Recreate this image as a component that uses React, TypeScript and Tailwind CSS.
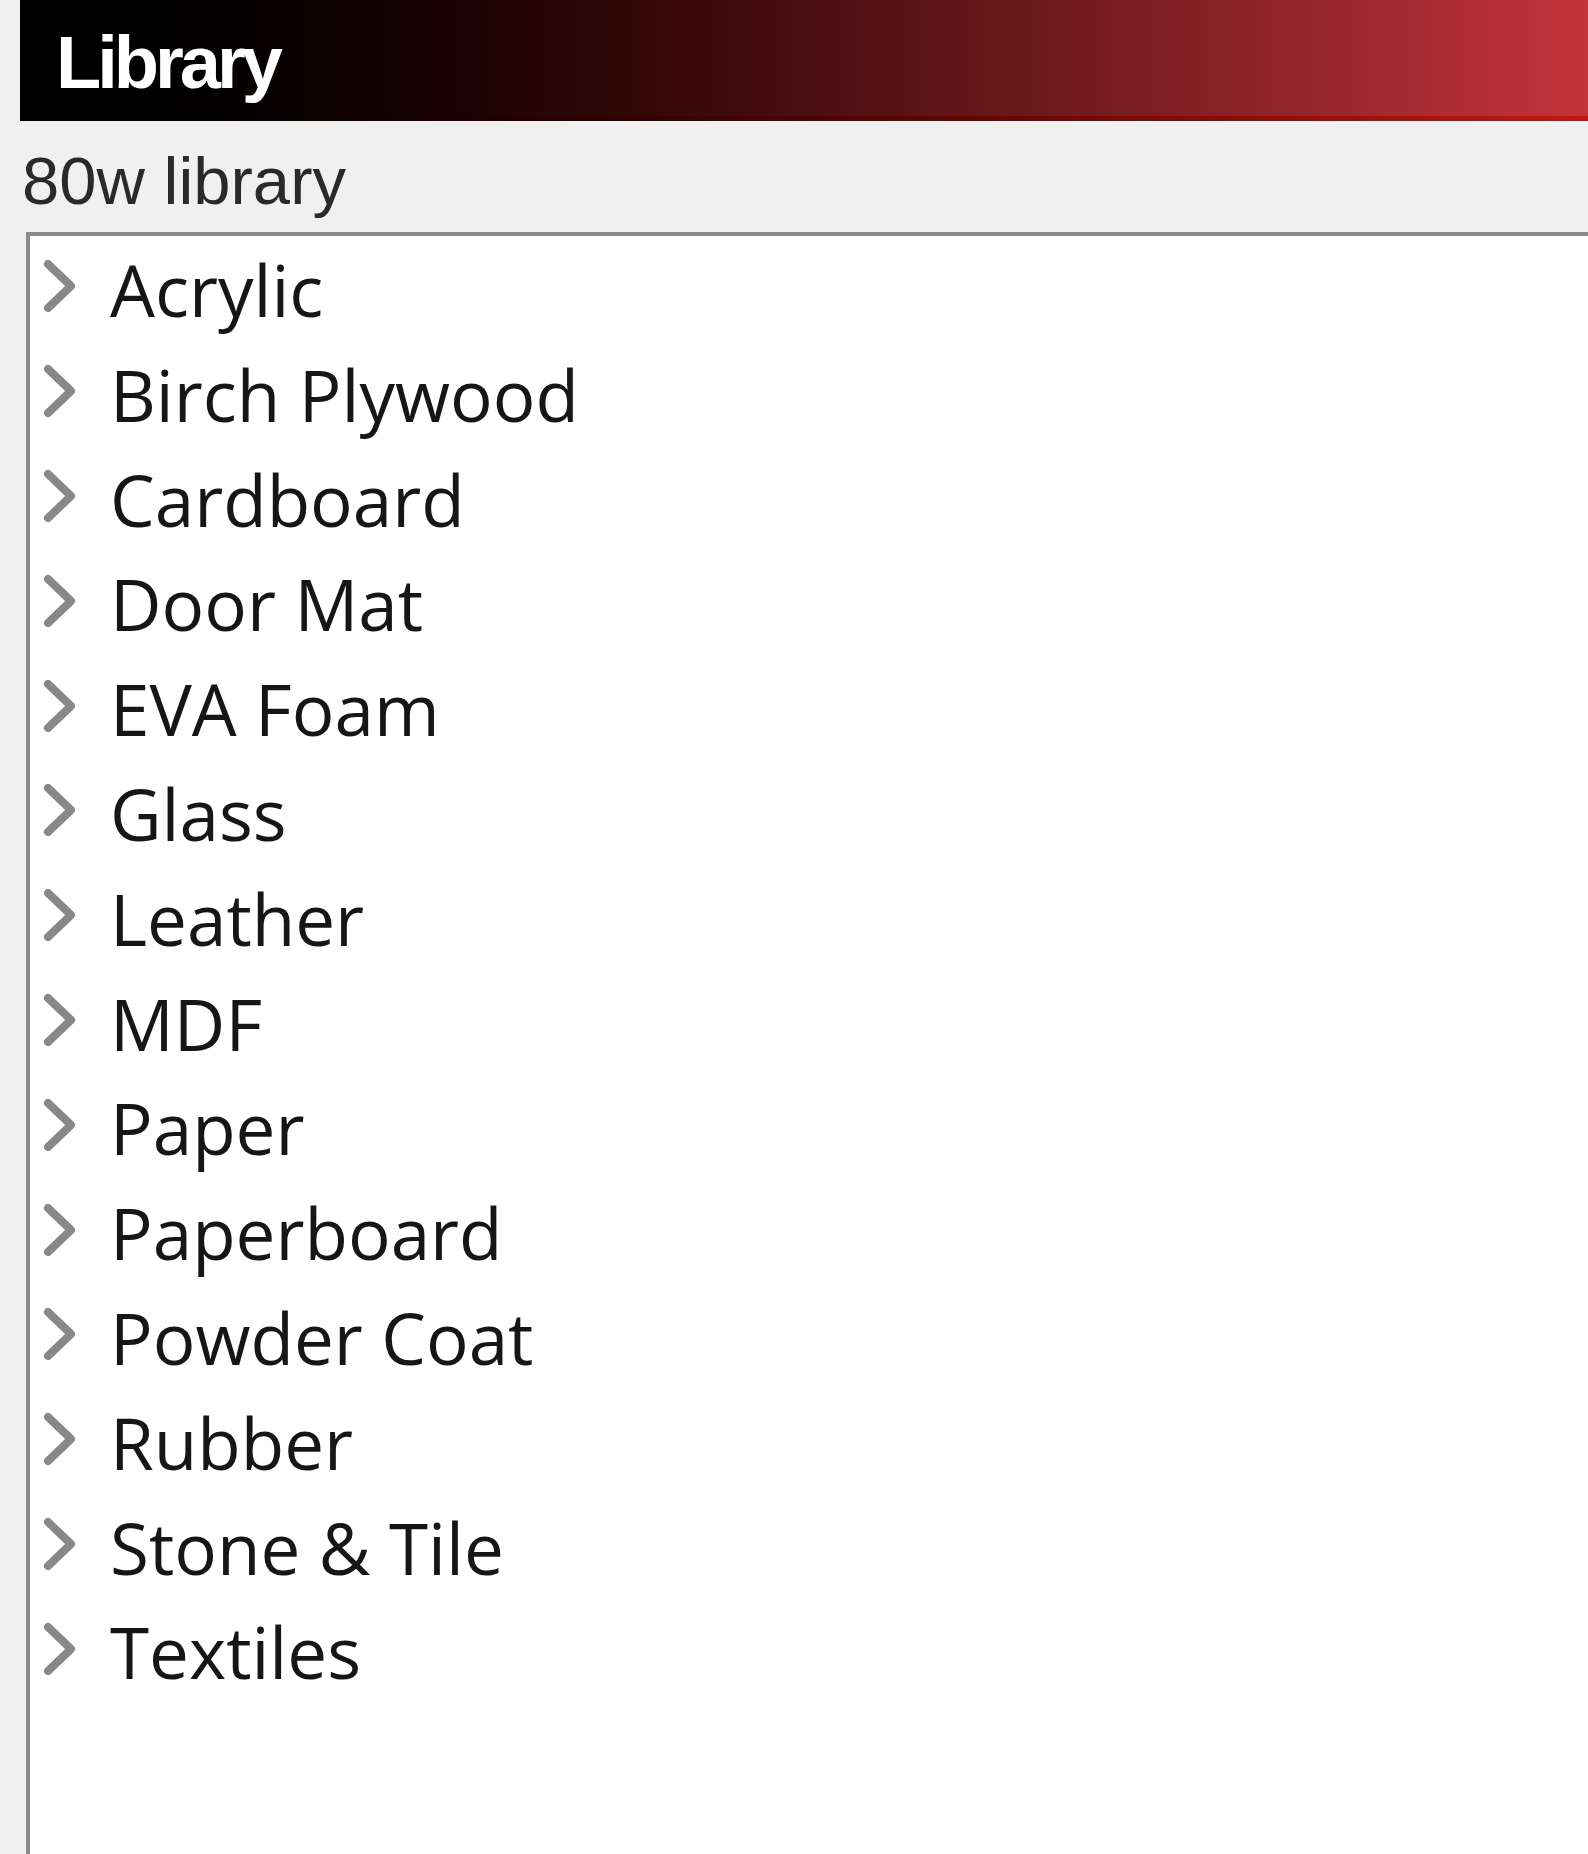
import React from 'react';

const materials: string[] = [
  'Acrylic',
  'Birch Plywood',
  'Cardboard',
  'Door Mat',
  'EVA Foam',
  'Glass',
  'Leather',
  'MDF',
  'Paper',
  'Paperboard',
  'Powder Coat',
  'Rubber',
  'Stone & Tile',
  'Textiles',
];

const Chevron: React.FC = () => (
  <svg width="34" height="54" viewBox="0 0 34 54" className="shrink-0 mb-[8px]">
    <path
      d="M6 5 L29 27 L6 49"
      fill="none"
      stroke="#888888"
      strokeWidth={8}
      strokeLinecap="round"
      strokeLinejoin="round"
    />
  </svg>
);

// one row of the material tree
const TreeRow: React.FC<{ label: string }> = ({ label }) => (
  <div className="flex items-center h-[104.8px]">
    <div className="ml-[12px] flex items-center">
      <Chevron />
    </div>
    <span
      className="ml-[34px] text-[71px] leading-[104.8px] text-[#161616] whitespace-nowrap"
      style={{ fontFamily: '"Open Sans", "Noto Sans", sans-serif' }}
    >
      {label}
    </span>
  </div>
);

export default function App() {
  return (
    <div className="w-[1588px] h-[1854px] bg-[#f0f0f0] pl-[20px] flex flex-col overflow-hidden">
      {/* title bar */}
      <div className="shrink-0">
        <div className="h-[116px] bg-gradient-to-r from-black to-[#c3343a] pl-[36px] pt-[20px]">
          <div
            className="text-[74px] leading-[1.15] font-bold text-white tracking-[-4px]"
            style={{ fontFamily: '"Liberation Sans", Arial, sans-serif' }}
          >
            Library
          </div>
        </div>
        <div className="h-[5px] bg-gradient-to-r from-black to-[#c8150f]" />
      </div>

      {/* library name */}
      <div
        className="pt-[21px] pl-[2px] text-[67px] leading-[1.15] text-[#2a2a2a]"
        style={{ fontFamily: '"Liberation Sans", Arial, sans-serif' }}
      >
        80w library
      </div>

      {/* tree box */}
      <div className="mt-[13px] ml-[6px] flex-1 bg-white border-l-[4px] border-t-[4px] border-[#8a8a8a] pt-[2px]">
        {materials.map((m) => (
          <TreeRow key={m} label={m} />
        ))}
      </div>
    </div>
  );
}
